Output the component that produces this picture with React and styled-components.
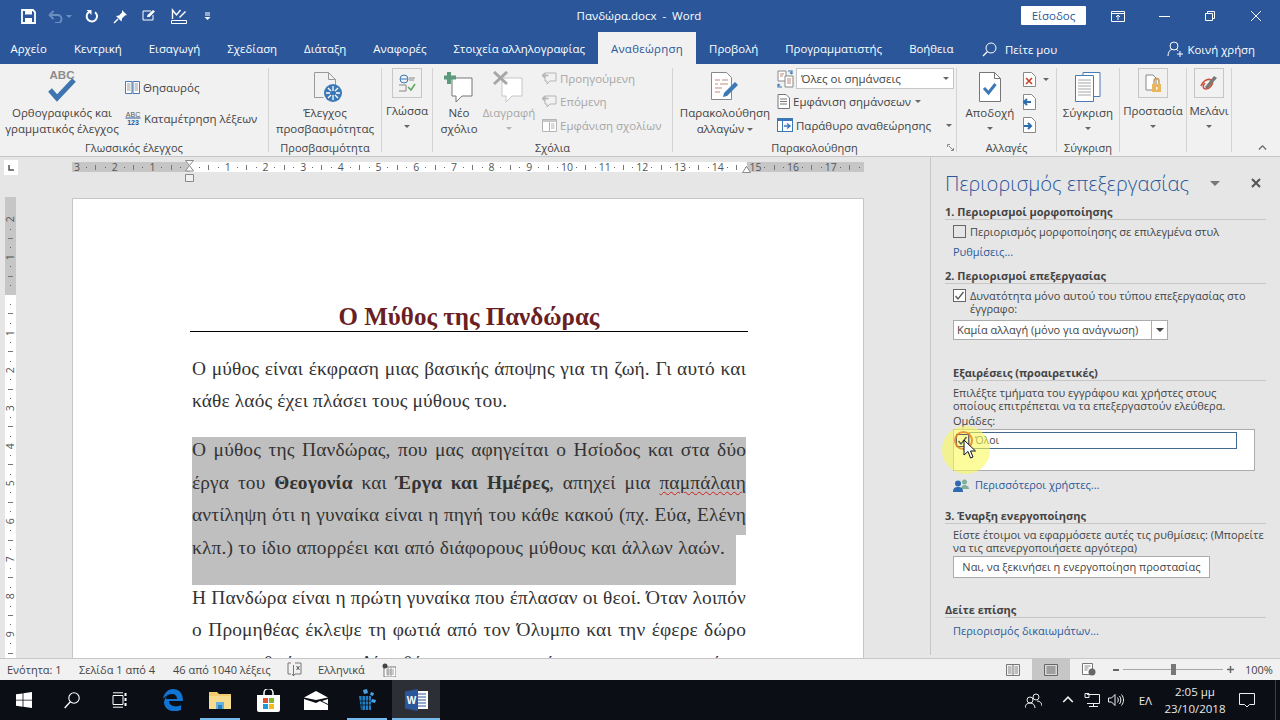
import React from 'react';
import styled, { createGlobalStyle } from 'styled-components';

const UI = '"Open Sans", "Noto Sans", sans-serif';
const BLUE = '#2b579a';

const Global = createGlobalStyle`
  html, body { margin: 0; padding: 0; background: #e6e6e6; }
  * { box-sizing: border-box; }
`;

const Frame = styled.div`
  width: 1280px;
  height: 720px;
  overflow: hidden;
  display: flex;
  flex-direction: column;
  font-family: ${UI};
  font-size: 11.5px;
  color: #444;
`;

const Svg = styled.svg`
  display: block;
  flex: none;
`;

/* ---------- title bar ---------- */
const TitleBar = styled.div`
  height: 32px;
  flex: none;
  display: flex;
  align-items: center;
  background: ${BLUE};
  color: #fff;
`;
const QuickAccess = styled.div`
  width: 559px;
  display: flex;
  align-items: center;
  padding-left: 14px;
`;
const QuickBtn = styled.div`
  width: ${(p) => p.$w || 29}px;
  height: 22px;
  display: flex;
  align-items: center;
  justify-content: center;
  gap: 3px;
`;
const DocTitle = styled.div`
  width: 160px;
  text-align: center;
  font-size: 11.5px;
  white-space: pre;
  margin-top: -1px;
`;
const WindowArea = styled.div`
  flex: 1;
  display: flex;
  align-items: center;
  justify-content: flex-end;
  padding-right: 1px;
`;
const SignIn = styled.div`
  width: 65px;
  height: 19px;
  margin: -1px 9px 0 0;
  background: #fff;
  color: ${BLUE};
  border-radius: 1px;
  font-size: 11.5px;
  line-height: 19px;
  text-align: center;
`;
const WinBtn = styled.div`
  width: 46px;
  height: 32px;
  display: flex;
  align-items: center;
  justify-content: center;
`;

/* ---------- tabs ---------- */
const TabBar = styled.div`
  height: 32px;
  flex: none;
  display: flex;
  align-items: stretch;
  background: ${BLUE};
`;
const Tab = styled.div`
  padding: 0 ${(p) => (p.$active ? 12.5 : 13.5)}px;
  height: 32px;
  line-height: 34px;
  font-size: 11.42px;
  letter-spacing: ${(p) => (p.$active ? 0.3 : 0)}px;
  white-space: nowrap;
  color: ${(p) => (p.$active ? BLUE : '#fff')};
  background: ${(p) => (p.$active ? '#f1f1f1' : 'transparent')};
  &:first-child { margin-left: -3px; }
`;
const TellMe = styled.div`
  display: flex;
  align-items: center;
  gap: 8px;
  margin-left: 15px;
  color: #fff;
  font-size: 11.42px;
  padding-top: 2px;
`;
const Share = styled.div`
  margin-left: auto;
  margin-right: 25px;
  display: flex;
  align-items: center;
  gap: 4px;
  color: #fff;
  font-size: 11.35px;
  padding-top: 2px;
`;

/* ---------- ribbon ---------- */
const Ribbon = styled.div`
  height: 93px;
  flex: none;
  display: flex;
  background: #f1f1f1;
  border-bottom: 1px solid #c6c6c6;
  padding-top: 4px;
`;
const Group = styled.div`
  position: relative;
  width: ${(p) => p.$w}px;
  height: 84px;
  flex: none;
  display: flex;
  flex-direction: column;
  border-right: 1px solid #d4d4d4;
`;
const GroupBody = styled.div`
  height: 73px;
  flex: none;
  display: flex;
  justify-content: ${(p) => (p.$center ? 'center' : 'flex-start')};
  padding-left: ${(p) => p.$pad || 0}px;
`;
const GroupLabel = styled.div`
  height: 11px;
  line-height: 14px;
  text-align: center;
  font-size: 11px;
  white-space: nowrap;
`;
const BigBtn = styled.div`
  width: ${(p) => p.$w}px;
  flex: none;
  display: flex;
  flex-direction: column;
  align-items: center;
  margin-left: ${(p) => p.$ml || 0}px;
  color: ${(p) => (p.$off ? '#a6a6a6' : '#444')};
`;
const IconSlot = styled.div`
  height: 37px;
  flex: none;
  display: flex;
  align-items: center;
  justify-content: center;
  padding-left: ${(p) => p.$pl || 0}px;
`;
const BoxSlot = styled.div`
  width: 30px;
  height: 30px;
  flex: none;
  display: flex;
  align-items: center;
  justify-content: center;
  border: 1px solid #c6c6c6;
  margin-bottom: 5px;
`;
const BtnText = styled.div`
  line-height: 16px;
  text-align: center;
  white-space: nowrap;
  font-size: 11.5px;
`;
const Caret = styled.span`
  display: inline-block;
  flex: none;
  width: 0;
  height: 0;
  border-left: ${(p) => p.$s || 3}px solid transparent;
  border-right: ${(p) => p.$s || 3}px solid transparent;
  border-top: ${(p) => p.$s || 3}px solid ${(p) => p.$c || '#666'};
  margin: ${(p) => p.$m || '0'};
  vertical-align: middle;
`;
const CaretRow = styled.div`
  height: 14px;
  display: flex;
  align-items: center;
  justify-content: center;
`;
const SmallCol = styled.div`
  display: flex;
  flex-direction: column;
  flex: none;
  gap: ${(p) => p.$gap}px;
  padding-top: ${(p) => p.$top || 0}px;
  margin-left: ${(p) => p.$ml || 0}px;
`;
const SmallRow = styled.div`
  height: ${(p) => p.$h || 16}px;
  margin-top: ${(p) => p.$mt || 0}px;
  display: flex;
  align-items: center;
  gap: ${(p) => (p.$gap === undefined ? 3 : p.$gap)}px;
  white-space: nowrap;
  color: ${(p) => (p.$off ? '#a6a6a6' : '#444')};
  font-size: 11.5px;
`;
const MarkupSelect = styled.div`
  width: 158px;
  height: 21px;
  display: flex;
  align-items: center;
  justify-content: space-between;
  padding: 0 4px;
  background: #fff;
  border: 1px solid #c6c6c6;
  font-size: 11.5px;
`;
const Launcher = styled.div`
  position: absolute;
  right: 2px;
  bottom: 1px;
`;
const Collapse = styled.div`
  margin-left: 26px;
  align-self: flex-start;
  margin-top: 77px;
`;

/* ---------- work area ---------- */
const Workspace = styled.div`
  flex: 1;
  min-height: 0;
  display: flex;
  background: #e6e6e6;
`;
const DocArea = styled.div`
  position: relative;
  width: 930px;
  flex: none;
  overflow: hidden;
`;
const CornerTab = styled.div`
  position: absolute;
  left: 4px;
  top: 3px;
  width: 14px;
  height: 15px;
  background: #fff;
  display: flex;
  align-items: center;
  justify-content: center;
`;
const HRuler = styled.div`
  position: relative;
  width: 792px;
  height: 10px;
  margin: 5px 0 0 72px;
  display: flex;
  padding-left: 0.3px;
  background: linear-gradient(to right, #c6c6c6 118px, #fff 118px, #fff 675px, #c6c6c6 675px);
`;
const Marker = styled.div`
  position: absolute;
  left: ${(p) => p.$x}px;
  top: ${(p) => p.$y}px;
`;
const RulerCell = styled.div`
  width: 9.425px;
  flex: none;
  display: flex;
  align-items: center;
  justify-content: center;
  font-size: 10.5px;
  line-height: 1;
  color: #555;
`;
const Dot = styled.span`
  width: 1px;
  height: 1px;
  background: #666;
`;
const Tick = styled.span`
  width: 1px;
  height: 5px;
  background: #777;
`;
const VRuler = styled.div`
  position: absolute;
  left: 5px;
  top: 40px;
  width: 11px;
  height: 461px;
  padding-top: 18px;
  display: flex;
  flex-direction: column;
  background: linear-gradient(to bottom, #c6c6c6 98px, #fff 98px);
`;
const VCell = styled.div`
  height: 9.425px;
  flex: none;
  display: flex;
  align-items: center;
  justify-content: center;
  font-size: 10.5px;
  line-height: 1;
  color: #555;
`;
const VNum = styled.span`
  transform: rotate(-90deg);
`;
const VTick = styled.span`
  width: 5px;
  height: 1px;
  background: #777;
`;
const Page = styled.div`
  width: 792px;
  margin: 26px 0 0 72px;
  height: 460px;
  overflow: hidden;
  background: #fff;
  border: 1px solid #c6c6c6;
  border-bottom: 0;
  padding: 103px 0 0 117px;
  font-family: "Liberation Serif", serif;
  color: #333;
`;
const DocHeading = styled.div`
  width: 558px;
  height: 30px;
  border-bottom: 1px solid #000;
  text-align: center;
  font-weight: 700;
  font-size: 25px;
  line-height: 30px;
  color: #6a1f24;
  margin-bottom: 23.5px;
`;
const Para = styled.div`
  width: 556px;
  padding-left: 2px;
  margin-bottom: ${(p) => p.$mb || 0}px;
`;
const Line = styled.div`
  height: ${(p) => 32.7 + (p.$extra || 0)}px;
  line-height: 25px;
  font-size: 19.4px;
  text-align: ${(p) => (p.$left ? 'left' : 'justify')};
  text-align-last: ${(p) => (p.$left ? 'left' : 'justify')};
  letter-spacing: 0.15px;
  margin-right: ${(p) => p.$mr || 0}px;
  padding-right: ${(p) => p.$pr || 0}px;
  background: ${(p) => (p.$sel ? '#bfbfbf' : 'transparent')};
`;
const Misspelled = styled.span`
  text-decoration: underline wavy #d02020 1px;
  text-underline-offset: 2px;
`;

/* ---------- restrict editing pane ---------- */
const Pane = styled.div`
  flex: 1;
  min-width: 0;
  margin-bottom: 3px;
  padding: 12px 14px 0 14px;
  border-left: 1px solid #c6c6c6;
`;
const PaneHead = styled.div`
  height: 28px;
  display: flex;
  align-items: center;
`;
const PaneTitle = styled.div`
  font-size: 20.2px;
  font-weight: 300;
  color: ${BLUE};
  width: 265px;
  white-space: nowrap;
`;
const PaneClose = styled.div`
  margin-left: 31px;
`;
const Heading = styled.div`
  height: 15px;
  line-height: 13px;
  margin-top: ${(p) => p.$mt}px;
  margin-left: ${(p) => p.$ml || 0}px;
  border-bottom: 1px solid #c6c6c6;
  font-weight: 700;
  font-size: 11px;
  color: #444;
  white-space: nowrap;
`;
const Indent = styled.div`
  margin-left: 8px;
  margin-top: ${(p) => p.$mt || 0}px;
`;
const CheckRow = styled.div`
  display: flex;
  align-items: flex-start;
  gap: 4px;
  line-height: 13px;
  font-size: 11px;
`;
const CheckBox = styled.div`
  width: 13px;
  height: 13px;
  flex: none;
  background: ${(p) => (p.$plain ? 'transparent' : '#fff')};
  border: 1px solid #666;
  display: flex;
  align-items: center;
  justify-content: center;
`;
const PaneLink = styled.div`
  line-height: 14px;
  font-size: 11px;
  color: #2b5a9a;
  white-space: nowrap;
`;
const PaneText = styled.div`
  line-height: 13px;
  font-size: 11px;
  white-space: nowrap;
`;
const SplitSelect = styled.div`
  width: 215px;
  height: 20px;
  display: flex;
  background: #fff;
  border: 1px solid #ababab;
  font-size: 11px;
  line-height: 18px;
  padding-left: 3px;
`;
const SplitArrow = styled.div`
  margin-left: auto;
  width: 16px;
  border-left: 1px solid #ababab;
  display: flex;
  align-items: center;
  justify-content: center;
`;
const GroupList = styled.div`
  position: relative;
  width: 302px;
  height: 42px;
  background: #fff;
  border: 1px solid #ababab;
`;
const GroupRow = styled.div`
  position: absolute;
  left: 15px;
  top: 2px;
  width: 268px;
  height: 17px;
  border: 1px solid #41688d;
  padding-left: 5px;
  line-height: 14px;
  font-size: 10.5px;
`;
const Spotlight = styled.div`
  position: absolute;
  left: -12px;
  top: -4px;
  width: 48px;
  height: 48px;
  border-radius: 50%;
  background: rgba(250, 250, 90, 0.6);
`;
const ListCheck = styled(CheckBox)`
  position: absolute;
  left: 2px;
  top: 4px;
  background: transparent;
`;
const ClickRing = styled.div`
  position: absolute;
  left: 0;
  top: 1px;
  width: 19px;
  height: 19px;
  border-radius: 50%;
  border: 2px solid rgba(232, 130, 40, 0.85);
`;
const Pointer = styled.div`
  position: absolute;
  left: 9px;
  top: 9px;
`;
const MoreUsers = styled.div`
  display: flex;
  align-items: center;
  gap: 6px;
`;
const PaneButton = styled.div`
  width: 257px;
  height: 22px;
  background: #fff;
  border: 1px solid #ababab;
  line-height: 20px;
  text-align: center;
  font-size: 11px;
  white-space: nowrap;
`;

/* ---------- status bar ---------- */
const StatusBar = styled.div`
  height: 22px;
  flex: none;
  display: flex;
  align-items: stretch;
  background: #f1f1f1;
  border-top: 1px solid #c6c6c6;
  font-size: 11px;
  color: #444;
  padding-left: 7px;
`;
const StatusItem = styled.div`
  display: flex;
  align-items: center;
  width: ${(p) => p.$w}px;
  flex: none;
  white-space: nowrap;
`;
const ViewBtn = styled.div`
  width: ${(p) => p.$w || 38}px;
  display: flex;
  align-items: center;
  justify-content: center;
  background: ${(p) => (p.$on ? '#c6c6c6' : 'transparent')};
`;
const Zoom = styled.div`
  display: flex;
  align-items: center;
  margin-left: 17px;
  gap: 4px;
`;
const ZoomTrack = styled.div`
  position: relative;
  width: 100px;
  height: 1px;
  background: #a6a6a6;
`;
const ZoomThumb = styled.div`
  position: absolute;
  left: 48px;
  top: -5px;
  width: 5px;
  height: 11px;
  background: #777;
`;
const ZoomText = styled.div`
  margin-left: 7px;
`;

/* ---------- task bar ---------- */
const TaskBar = styled.div`
  height: 40px;
  flex: none;
  display: flex;
  align-items: stretch;
  background: #0b0e15;
  color: #e8e8e8;
`;
const TaskBtn = styled.div`
  position: relative;
  width: 48px;
  flex: none;
  margin-left: ${(p) => p.$ml || 0}px;
  display: flex;
  align-items: center;
  justify-content: center;
  background: ${(p) => (p.$on ? '#2c2f36' : 'transparent')};
  &::after {
    content: '';
    position: absolute;
    left: ${(p) => (p.$on ? 0 : 4)}px;
    right: ${(p) => (p.$on ? 0 : 4)}px;
    bottom: 0;
    height: 2px;
    background: ${(p) => (p.$run ? '#76b9ed' : 'transparent')};
  }
`;
const Tray = styled.div`
  margin-left: auto;
  display: flex;
  align-items: center;
  padding-right: 20px;
`;
const TrayItem = styled.div`
  display: flex;
  align-items: center;
  justify-content: center;
  flex: none;
  margin-left: ${(p) => p.$ml || 0}px;
`;
const Lang = styled.div`
  font-size: 11.5px;
  margin-left: 15px;
`;
const Clock = styled.div`
  width: 70px;
  margin-left: 8px;
  font-size: 11.5px;
  line-height: 17px;
  text-align: center;
`;
const ShowDesktop = styled.div`
  width: 5px;
  flex: none;
  border-left: 1px solid #3c3f46;
`;

/* ---------- icons ---------- */
const SaveIcon = () => (
  <Svg width="15" height="15" viewBox="0 0 15 15">
    <path d="M1 1h11l2 2v11H1z" fill="none" stroke="#fff" strokeWidth="1.8" />
    <path d="M4 1.5h7v4H4z" fill="#fff" />
    <path d="M4 9h7v5H4z" fill="#fff" />
  </Svg>
);
const UndoIcon = () => (
  <Svg width="15" height="13" viewBox="0 0 15 13">
    <path d="M1.5 5h8a4 4 0 0 1 0 8H7" fill="none" stroke="#6d8fc0" strokeWidth="1.8" />
    <path d="M5.5 1L1.5 5l4 4" fill="none" stroke="#6d8fc0" strokeWidth="1.8" />
  </Svg>
);
const RepeatIcon = () => (
  <Svg width="14" height="14" viewBox="0 0 14 14">
    <path d="M4 3a5.2 5.2 0 1 0 6 .2" fill="none" stroke="#fff" strokeWidth="2" />
    <path d="M1.5 1h5v5z" fill="#fff" />
  </Svg>
);
const PinIcon = () => (
  <Svg width="15" height="15" viewBox="0 0 15 15">
    <path d="M9 1l5 5-2 .5-3 3-.5 3L3 7l3-.5 3-3z" fill="#fff" />
    <path d="M5 10l-4 4" stroke="#fff" strokeWidth="1.4" />
  </Svg>
);
const NoteIcon = () => (
  <Svg width="15" height="14" viewBox="0 0 15 14">
    <path d="M9 2H1v9h10V6" fill="none" stroke="#fff" />
    <path d="M5 8l.5-2L11 1l2 1.5L7.500 8z" fill="#fff" />
  </Svg>
);
const MarkRulerIcon = () => (
  <Svg width="16" height="16" viewBox="0 0 16 16">
    <path d="M1.500 11V2l4 5 4-5" fill="none" stroke="#fff" strokeWidth="1.4" />
    <path d="M8 9l6-6 1 1-6 6z" fill="#fff" />
    <path d="M.5 12.500h15v3H.5z" fill="none" stroke="#fff" />
  </Svg>
);
const MoreIcon = () => (
  <Svg width="7" height="8" viewBox="0 0 7 8">
    <path d="M1 1h5M1 3h5" stroke="#fff" />
    <path d="M.5 5h6L3.500 8z" fill="#fff" />
  </Svg>
);
const SpellIcon = () => (
  <Svg width="34" height="36" viewBox="0 0 34 36">
    <text x="17" y="10" textAnchor="middle" fontSize="11.500" fontWeight="700" fill="#8c8c8c" fontFamily="Liberation Sans">ABC</text>
    <path d="M5 21l7 8L29 11" fill="none" stroke="#3e75b0" strokeWidth="5" />
  </Svg>
);
const BookIcon = () => (
  <Svg width="15" height="13" viewBox="0 0 15 13">
    <path d="M.5.500h6.500v12H.5zM8 .5h6.500v12H8z" fill="#fff" stroke="#4a7bb5" />
    <path d="M2 3h3.500M2 5h3.500M2 7h3.500M2 9h3.500M9.500 3H13M9.500 5H13M9.500 7H13M9.500 9H13" stroke="#999" />
  </Svg>
);
const CountIcon = () => (
  <Svg width="16" height="16" viewBox="0 0 16 16">
    <text x="8" y="6.500" textAnchor="middle" fontSize="7" fill="#555" fontFamily="Liberation Sans">ABC</text>
    <path d="M.5 8h15" stroke="#2b579a" />
    <text x="8" y="14.500" textAnchor="middle" fontSize="7" fontWeight="700" fill="#2b579a" fontFamily="Liberation Sans">123</text>
  </Svg>
);
const AccessIcon = () => (
  <Svg width="30" height="32" viewBox="0 0 30 32">
    <path d="M1.500 1.500h14l7 7v9M1.500 1.500v25h9" fill="none" stroke="#999" />
    <path d="M15.500 1.500v7h7" fill="none" stroke="#999" />
    <circle cx="20" cy="22" r="9" fill="#3b78b5" />
    <path d="M20 15v5M20 24v5M13 22h4M23 22h4M15 17l3 3M25 17l-3 3M15 27l3-3M25 27l-3-3" stroke="#fff" strokeWidth="1.300" />
  </Svg>
);
const LanguageIcon = () => (
  <Svg width="18" height="18" viewBox="0 0 18 18">
    <circle cx="6" cy="5" r="4" fill="none" stroke="#3b78b5" />
    <path d="M2 5h8" stroke="#3b78b5" />
    <path d="M11 4h6M11 6h5M1 11h7v6H1" fill="none" stroke="#888" />
    <path d="M10 13l3 3 4-6" fill="none" stroke="#5da55d" strokeWidth="1.500" />
  </Svg>
);
const CommentShape = ({ stroke = '#777' }) => (
  <path d="M8 8h20v18H18l-6 6v-6H8z" fill="#fff" stroke={stroke} transform="translate(1 -1)" />
);
const NewCommentIcon = () => (
  <Svg width="32" height="32" viewBox="0 0 32 32">
    <CommentShape />
    <path d="M5 1v12M0 6.500h12" stroke="#5b9a7c" strokeWidth="4" transform="translate(1 0)" />
  </Svg>
);
const DelCommentIcon = () => (
  <Svg width="32" height="32" viewBox="0 0 32 32">
    <CommentShape stroke="#c6c6c6" />
    <path d="M1 1l13 12M14 1L1 13" stroke="#a6a6a6" strokeWidth="3" />
  </Svg>
);
const PrevIcon = () => (
  <Svg width="15" height="15" viewBox="0 0 15 15">
    <path d="M3 2h11v8H8l-3 3v-3H3z" fill="none" stroke="#b5b5b5" />
    <path d="M.5 4.500h6M3 2L.5 4.500 3 7" fill="none" stroke="#b5b5b5" strokeWidth="1.300" />
  </Svg>
);
const ShowCommentsIcon = () => (
  <Svg width="15" height="13" viewBox="0 0 15 13">
    <path d="M.5.500h14v12H.5z" fill="#fff" stroke="#b5b5b5" />
    <path d="M1 1h13v2H1z" fill="#c9c9c9" />
    <path d="M9 5h3.500M9 7h3.500M9 9h3.500" stroke="#b5b5b5" />
    <path d="M7.500 3v9" stroke="#b5b5b5" />
  </Svg>
);
const TrackIcon = () => (
  <Svg width="30" height="30" viewBox="0 0 30 30">
    <path d="M1.500.5h15l5 5v22h-20z" fill="#fff" stroke="#888" />
    <path d="M5 8h5M12 8h6M5 12h3M10 12h8M5 16h7M5 20h5" stroke="#c08a78" />
    <path d="M13 25l1-4L25 10l3 3-11 11z" fill="#3b78b5" />
  </Svg>
);
const DisplayIcon = () => (
  <Svg width="17" height="18" viewBox="0 0 17 18">
    <path d="M1 1h8v10H1z" fill="#fff" stroke="#888" />
    <path d="M8 6h8v11H8z" fill="#fff" stroke="#888" />
    <path d="M10 9h4M10 11h4M10 13h4M3 4h4M3 6h3" stroke="#c08a78" />
    <path d="M11 1h4v3M15 4l-2-1.500M1 14v3h4M1 14l2 1.500" fill="none" stroke="#3b78b5" strokeWidth="1.200" />
  </Svg>
);
const ShowMarkupIcon = () => (
  <Svg width="13" height="15" viewBox="0 0 13 15">
    <path d="M1 .5h8l3.500 3.500v10.500H1z" fill="#fff" stroke="#777" />
    <path d="M3 5h7M3 7.500h7M3 10h7" stroke="#777" />
  </Svg>
);
const ReviewPaneIcon = () => (
  <Svg width="16" height="14" viewBox="0 0 16 14">
    <path d="M0 0h16v14H0z" fill="#3b78b5" />
    <path d="M1 3h4v10H1zM6 3h9v10H6z" fill="#fff" />
    <path d="M7 8h5M10 5.500L13 8l-3 2.500" fill="none" stroke="#3b78b5" strokeWidth="1.400" />
  </Svg>
);
const AcceptIcon = () => (
  <Svg width="22" height="30" viewBox="0 0 22 30">
    <path d="M.5.500h15l6 6v23H.5z" fill="#fff" stroke="#777" />
    <path d="M15.500.5v6h6" fill="none" stroke="#777" />
    <path d="M5 16l4.500 5 7-9" fill="none" stroke="#3b78b5" strokeWidth="3" />
  </Svg>
);
const RejectIcon = () => (
  <Svg width="13" height="15" viewBox="0 0 13 15">
    <path d="M.5.500h8l4 4v10H.5z" fill="#fff" stroke="#888" />
    <path d="M3 6l6 6M9 6l-6 6" stroke="#c8402a" strokeWidth="1.600" />
  </Svg>
);
const SmallDocArrow = ({ flip }) => (
  <Svg width="13" height="16" viewBox="0 0 13 16">
    <path d="M.5.500h8l4 4v11H.5z" fill="#fff" stroke="#888" />
    <path d={flip ? 'M1 8h7M4 5L1 8l3 3' : 'M1 9h7M5 6l3 3-3 3'} fill="none" stroke="#2b6cab" strokeWidth="2" />
  </Svg>
);
const CompareIcon = () => (
  <Svg width="26" height="30" viewBox="0 0 26 30">
    <path d="M8 .5h17v24H8z" fill="#fff" stroke="#4a7bb5" />
    <path d="M.5 3.500h18v26H.5z" fill="#fff" stroke="#4a7bb5" />
    <path d="M3 8h13M3 11h13M3 14h13M3 17h13M3 20h13M3 23h13" stroke="#a6a6a6" />
  </Svg>
);
const ProtectIcon = () => (
  <Svg width="20" height="20" viewBox="0 0 20 20">
    <path d="M3 2h7l3 3v12H3z" fill="#fff" stroke="#888" />
    <path d="M9 11h9v8H9z" fill="#e9b65d" />
    <path d="M11 11V8a2.500 2.500 0 0 1 5 0v3" fill="none" stroke="#c29a55" strokeWidth="1.400" />
    <path d="M13 14h1.500v2.500H13z" fill="#fff" />
  </Svg>
);
const InkIcon = () => (
  <Svg width="20" height="20" viewBox="0 0 20 20">
    <path d="M2 13c3-7 9-8 11-5s-3 8-6 8-4-3-1-6" fill="none" stroke="#c8503a" strokeWidth="1.600" />
    <path d="M6 14L15 3l3 2-10 11z" fill="#777" />
  </Svg>
);
const LauncherIcon = () => (
  <Svg width="7" height="7" viewBox="0 0 7 7">
    <path d="M.5 3V.5H3M6.500 4v2.500H4" fill="none" stroke="#888" />
    <path d="M2 2l4 4" stroke="#888" />
  </Svg>
);
const ChevronUp = ({ c = '#666', s = 9 }) => (
  <Svg width={s} height={s * 0.6} viewBox="0 0 10 6">
    <path d="M1 5l4-4 4 4" fill="none" stroke={c} strokeWidth="1.400" />
  </Svg>
);
const CheckMark = () => (
  <Svg width="11" height="10" viewBox="0 0 11 10">
    <path d="M1.500 5l2.500 3 5.500-7" fill="none" stroke="#555" strokeWidth="1.300" />
  </Svg>
);
const CursorArrow = () => (
  <Svg width="14" height="21" viewBox="0 0 14 21">
    <path d="M1 1v15l4-3.500 2.500 6.500 2.500-1-2.500-6h5z" fill="#fff" stroke="#111" strokeWidth="1" />
  </Svg>
);
const UsersIcon = () => (
  <Svg width="16" height="13" viewBox="0 0 16 13">
    <circle cx="11.500" cy="3" r="2.500" fill="#7fae9a" />
    <path d="M8 10c0-3 2-4 3.500-4S16 7 16 10z" fill="#7fae9a" />
    <circle cx="5" cy="4.500" r="3" fill="#2f6bb0" />
    <path d="M0 13c0-4 2-5 5-5s5 1 5 5z" fill="#2f6bb0" />
  </Svg>
);
const BookXIcon = () => (
  <Svg width="15" height="15" viewBox="0 0 15 15">
    <path d="M4 1H1v11h3M8 1h6v11H8M6.500 3v11M5 12l1.500 2L8 12" fill="none" stroke="#777" />
    <path d="M9.500 4l3 4M12.500 4l-3 4" stroke="#555" />
  </Svg>
);
const MacroIcon = () => (
  <Svg width="14" height="14" viewBox="0 0 14 14">
    <path d="M2 4h12v10H2z" fill="#fff" stroke="#777" />
    <path d="M4 7h8M4 9h8M4 11h8M6 5v8M9 5v8" stroke="#999" />
    <circle cx="3" cy="3" r="2.500" fill="#444" />
  </Svg>
);
const ReadViewIcon = () => (
  <Svg width="14" height="12" viewBox="0 0 14 12">
    <path d="M.5.500h13v11H.5zM7 .5v11" fill="none" stroke="#777" />
    <path d="M2 3h3.500M2 5h3.500M2 7h3.500M2 9h3.500M8.500 3H12M8.500 5H12M8.500 7H12M8.500 9H12" stroke="#888" />
  </Svg>
);
const PrintViewIcon = () => (
  <Svg width="14" height="12" viewBox="0 0 14 12">
    <path d="M.5.500h13v11H.5z" fill="#d8d8d8" stroke="#666" />
    <path d="M2.500 3h9M2.500 5h9M2.500 7h9M2.500 9h9" stroke="#666" />
  </Svg>
);
const WebViewIcon = () => (
  <Svg width="14" height="13" viewBox="0 0 14 13">
    <path d="M.5.500h10v11H.5z" fill="#fff" stroke="#777" />
    <path d="M2.500 3h6M2.500 5h4M2.500 7h3" stroke="#888" />
    <circle cx="10" cy="9" r="3.500" fill="#666" />
  </Svg>
);
const WinLogo = () => (
  <Svg width="16" height="16" viewBox="0 0 16 16">
    <path d="M0 2.300l6.600-.9v6.300H0zM7.400 1.300L16 0v7.700H7.400zM0 8.400h6.600v6.300L0 13.800zM7.400 8.400H16V16l-8.600-1.200z" fill="#fff" />
  </Svg>
);
const TaskSearch = () => (
  <Svg width="16" height="17" viewBox="0 0 16 17">
    <circle cx="10" cy="6" r="5.200" fill="none" stroke="#fff" strokeWidth="1.100" />
    <path d="M6.300 9.800L.7 16" stroke="#fff" strokeWidth="1.300" />
  </Svg>
);
const TaskView = () => (
  <Svg width="16" height="16" viewBox="0 0 16 16">
    <path d="M1 3.500h10v9H1zM1 .8h10M1 15.200h10" fill="none" stroke="#fff" />
    <path d="M13.500 1v3M13.500 6v3M13.500 11v3" stroke="#fff" strokeWidth="2" />
  </Svg>
);
const EdgeLogo = () => (
  <Svg width="21" height="22" viewBox="0 0 21 22">
    <path d="M1 10C2 3 7 0 11 0c6 0 10 4 10 12H7c0 5 7 7 12 4v5c-7 3-16 1-17-7 0-3 1-5 3-7-1 2-1 3-1 3h11c0-3-2-5-5-5S3 7 1 10z" fill="#1173d4" />
  </Svg>
);
const FolderLogo = () => (
  <Svg width="22" height="18" viewBox="0 0 22 18">
    <path d="M0 1h8l2 2h12v15H0z" fill="#f2cc6e" />
    <path d="M0 5h22v13H0z" fill="#f7dc8e" />
    <path d="M7 11h8v7H7z" fill="#63b1de" />
    <path d="M9 14h4v4H9z" fill="#2d7fb6" />
  </Svg>
);
const StoreLogo = () => (
  <Svg width="23" height="23" viewBox="0 0 23 23">
    <path d="M7 6V4a4.500 4.500 0 0 1 9 0v2" fill="none" stroke="#fff" strokeWidth="1.500" />
    <path d="M0 6h23v15a2 2 0 0 1-2 2H2a2 2 0 0 1-2-2z" fill="#fff" />
    <path d="M6 9h5v5H6z" fill="#e2502d" />
    <path d="M12 9h5v5h-5z" fill="#7fb62f" />
    <path d="M6 15h5v5H6z" fill="#1e9be0" />
    <path d="M12 15h5v5h-5z" fill="#f5bb1b" />
  </Svg>
);
const MailLogo = () => (
  <Svg width="24" height="19" viewBox="0 0 24 19">
    <path d="M12 0l12 6.500L12 9 0 6.500z" fill="#fff" />
    <path d="M0 8l12 4 4-2 8 4v5H0z" fill="#fff" />
    <path d="M24 8v5l-6-3z" fill="#fff" />
  </Svg>
);
const StackLogo = () => (
  <Svg width="20" height="22" viewBox="0 0 20 22">
    <path d="M2 7h12v14H4z" fill="#1f7fc4" />
    <path d="M5 7v14M8.500 7v14M11.500 7v14M2 12h12M3 16h11" stroke="#0b0e15" strokeWidth="0.800" />
    <path d="M6 1l4-1 1 4-4 1zM14 3l3 1-1 3-3-1zM15 10l4 1-1 3-4-1z" fill="#4aa3df" />
  </Svg>
);
const WordLogo = () => (
  <Svg width="23" height="22" viewBox="0 0 23 22">
    <path d="M10 2h13v18H10z" fill="#fff" />
    <path d="M12 5h9M12 8h9M12 11h9M12 14h9M12 17h9" stroke="#2b579a" />
    <path d="M0 2.500L13 0v22L0 19.500z" fill="#2b579a" />
    <text x="6.500" y="15" textAnchor="middle" fontSize="10" fontWeight="700" fill="#fff" fontFamily="Liberation Sans">W</text>
  </Svg>
);

const hNumbers = [3, 2, 1, '', 1, 2, 3, 4, 5, 6, 7, 8, 9, 10, 11, 12, 13, 14, 15, 16, 17];
const vNumbers = [2, 1, '', 1, 2, 3, 4, 5, 6, 7, 8, 9];

const App = () => {
  return (
    <Frame>
      <Global />
      <TitleBar>
        <QuickAccess>
          <QuickBtn><SaveIcon /></QuickBtn>
          <QuickBtn $w={34}><UndoIcon /><Caret $c="#6d8fc0" /></QuickBtn>
          <QuickBtn><RepeatIcon /></QuickBtn>
          <QuickBtn><PinIcon /></QuickBtn>
          <QuickBtn><NoteIcon /></QuickBtn>
          <QuickBtn><MarkRulerIcon /></QuickBtn>
          <QuickBtn><MoreIcon /></QuickBtn>
        </QuickAccess>
        <DocTitle>Πανδώρα.docx  -  Word</DocTitle>
        <WindowArea>
          <SignIn>Είσοδος</SignIn>
          <WinBtn>
            <Svg width="14" height="11" viewBox="0 0 14 11">
              <path d="M.5.500h13v10H.5zM.5 2.500h13M7 9V4M5 6l2-2 2 2" fill="none" stroke="#fff" />
            </Svg>
          </WinBtn>
          <WinBtn>
            <Svg width="11" height="1" viewBox="0 0 11 1"><path d="M0 .5h11" stroke="#fff" /></Svg>
          </WinBtn>
          <WinBtn>
            <Svg width="10" height="10" viewBox="0 0 10 10">
              <path d="M.5 2.500h7v7h-7zM2.500 2.500v-2h7v7h-2" fill="none" stroke="#fff" />
            </Svg>
          </WinBtn>
          <WinBtn>
            <Svg width="10" height="10" viewBox="0 0 10 10"><path d="M0 0l10 10M10 0L0 10" stroke="#fff" /></Svg>
          </WinBtn>
        </WindowArea>
      </TitleBar>

      <TabBar>
        <Tab>Αρχείο</Tab>
        <Tab>Κεντρική</Tab>
        <Tab>Εισαγωγή</Tab>
        <Tab>Σχεδίαση</Tab>
        <Tab>Διάταξη</Tab>
        <Tab>Αναφορές</Tab>
        <Tab>Στοιχεία αλληλογραφίας</Tab>
        <Tab $active>Αναθεώρηση</Tab>
        <Tab>Προβολή</Tab>
        <Tab>Προγραμματιστής</Tab>
        <Tab>Βοήθεια</Tab>
        <TellMe>
          <Svg width="15" height="15" viewBox="0 0 15 15">
            <circle cx="9" cy="6" r="5" fill="none" stroke="#fff" />
            <path d="M5.500 9.500L1 14" stroke="#fff" strokeWidth="1.200" />
          </Svg>
          Πείτε μου
        </TellMe>
        <Share>
          <Svg width="16" height="16" viewBox="0 0 16 16">
            <circle cx="7" cy="5" r="4" fill="none" stroke="#fff" />
            <path d="M1 15c0-4 2-6 4-7M9 8c1 .4 1.500 1 2 2M10 13h6M13 10v6" fill="none" stroke="#fff" />
          </Svg>
          Κοινή χρήση
        </Share>
      </TabBar>

      <Ribbon>
        <Group $w={269}>
          <GroupBody $pad={4}>
            <BigBtn $w={116}>
              <IconSlot><SpellIcon /></IconSlot>
              <BtnText>Ορθογραφικός και</BtnText>
              <BtnText>γραμματικός έλεγχος</BtnText>
            </BigBtn>
            <SmallCol $ml={5} $top={11} $gap={15}>
              <SmallRow><BookIcon />Θησαυρός</SmallRow>
              <SmallRow><CountIcon />Καταμέτρηση λέξεων</SmallRow>
            </SmallCol>
          </GroupBody>
          <GroupLabel>Γλωσσικός έλεγχος</GroupLabel>
        </Group>

        <Group $w={113}>
          <GroupBody $center>
            <BigBtn $w={112}>
              <IconSlot $pl={5}><AccessIcon /></IconSlot>
              <BtnText>Έλεγχος</BtnText>
              <BtnText>προσβασιμότητας</BtnText>
            </BigBtn>
          </GroupBody>
          <GroupLabel>Προσβασιμότητα</GroupLabel>
        </Group>

        <Group $w={51}>
          <GroupBody $center>
            <BigBtn $w={50}>
              <BoxSlot><LanguageIcon /></BoxSlot>
              <BtnText>Γλώσσα</BtnText>
              <CaretRow><Caret /></CaretRow>
            </BigBtn>
          </GroupBody>
        </Group>

        <Group $w={240}>
          <GroupBody>
            <BigBtn $w={50} $ml={1}>
              <IconSlot><NewCommentIcon /></IconSlot>
              <BtnText>Νέο</BtnText>
              <BtnText>σχόλιο</BtnText>
            </BigBtn>
            <BigBtn $w={50} $off>
              <IconSlot><DelCommentIcon /></IconSlot>
              <BtnText>Διαγραφή</BtnText>
              <CaretRow><Caret $c="#b5b5b5" /></CaretRow>
            </BigBtn>
            <SmallCol $ml={8} $top={2} $gap={7.5}>
              <SmallRow $off><PrevIcon />Προηγούμενη</SmallRow>
              <SmallRow $off><PrevIcon />Επόμενη</SmallRow>
              <SmallRow $off><ShowCommentsIcon />Εμφάνιση σχολίων</SmallRow>
            </SmallCol>
          </GroupBody>
          <GroupLabel>Σχόλια</GroupLabel>
        </Group>

        <Group $w={284}>
          <GroupBody>
            <BigBtn $w={100} $ml={2}>
              <IconSlot><TrackIcon /></IconSlot>
              <BtnText>Παρακολούθηση</BtnText>
              <BtnText>αλλαγών <Caret /></BtnText>
            </BigBtn>
            <SmallCol $ml={2} $gap={4}>
              <SmallRow $gap={2} $h={21}>
                <DisplayIcon />
                <MarkupSelect>Όλες οι σημάνσεις<Caret /></MarkupSelect>
              </SmallRow>
              <SmallRow>
                <ShowMarkupIcon />Εμφάνιση σημάνσεων<Caret $m="0 0 0 1px" />
              </SmallRow>
              <SmallRow $mt={4}>
                <ReviewPaneIcon />Παράθυρο αναθεώρησης<Caret $m="0 0 0 12px" />
              </SmallRow>
            </SmallCol>
          </GroupBody>
          <GroupLabel>Παρακολούθηση</GroupLabel>
          <Launcher><LauncherIcon /></Launcher>
        </Group>

        <Group $w={100}>
          <GroupBody>
            <BigBtn $w={60} $ml={3}>
              <IconSlot><AcceptIcon /></IconSlot>
              <BtnText>Αποδοχή</BtnText>
              <CaretRow><Caret /></CaretRow>
            </BigBtn>
            <SmallCol $top={3} $gap={7} $ml={3}>
              <SmallRow $gap={7}><RejectIcon /><Caret /></SmallRow>
              <SmallRow><SmallDocArrow flip /></SmallRow>
              <SmallRow><SmallDocArrow /></SmallRow>
            </SmallCol>
          </GroupBody>
          <GroupLabel>Αλλαγές</GroupLabel>
        </Group>

        <Group $w={63}>
          <GroupBody $center>
            <BigBtn $w={62}>
              <IconSlot><CompareIcon /></IconSlot>
              <BtnText>Σύγκριση</BtnText>
              <CaretRow><Caret /></CaretRow>
            </BigBtn>
          </GroupBody>
          <GroupLabel>Σύγκριση</GroupLabel>
        </Group>

        <Group $w={67}>
          <GroupBody $center>
            <BigBtn $w={66}>
              <BoxSlot><ProtectIcon /></BoxSlot>
              <BtnText>Προστασία</BtnText>
              <CaretRow><Caret /></CaretRow>
            </BigBtn>
          </GroupBody>
        </Group>

        <Group $w={45}>
          <GroupBody $center>
            <BigBtn $w={44}>
              <BoxSlot><InkIcon /></BoxSlot>
              <BtnText>Μελάνι</BtnText>
              <CaretRow><Caret /></CaretRow>
            </BigBtn>
          </GroupBody>
        </Group>

        <Collapse><ChevronUp /></Collapse>
      </Ribbon>

      <Workspace>
        <DocArea>
          <CornerTab>
            <Svg width="6" height="6" viewBox="0 0 6 6"><path d="M1 0v5h5" fill="none" stroke="#555" strokeWidth="1.500" /></Svg>
          </CornerTab>
          <HRuler>
            {hNumbers.map((n, i) => (
              <React.Fragment key={i}>
                <RulerCell>{n}</RulerCell>
                <RulerCell><Dot /></RulerCell>
                <RulerCell><Tick /></RulerCell>
                <RulerCell><Dot /></RulerCell>
              </React.Fragment>
            ))}
            <Marker $x={113} $y={-2}>
              <Svg width="9" height="22" viewBox="0 0 9 22">
                <path d="M.5.500h8L4.500 5.500l4 5.500H.5l4-5.500z" fill="#fff" stroke="#8a8a8a" />
                <path d="M.5 14.500h8v7h-8z" fill="#f1f1f1" stroke="#8a8a8a" />
              </Svg>
            </Marker>
            <Marker $x={670} $y={4}>
              <Svg width="9" height="7" viewBox="0 0 9 7"><path d="M.5 6.500L4.500.5l4 6z" fill="#fff" stroke="#8a8a8a" /></Svg>
            </Marker>
          </HRuler>
          <VRuler>
            {vNumbers.map((n, i) => (
              <React.Fragment key={i}>
                <VCell><VNum>{n}</VNum></VCell>
                <VCell><Dot /></VCell>
                <VCell><VTick /></VCell>
                <VCell><Dot /></VCell>
              </React.Fragment>
            ))}
          </VRuler>
          <Page>
            <DocHeading>Ο Μύθος της Πανδώρας</DocHeading>
            <Para $mb={16.1}>
              <Line>Ο μύθος είναι έκφραση μιας βασικής άποψης για τη ζωή. Γι αυτό και</Line>
              <Line $left>κάθε λαός έχει πλάσει τους μύθους του.</Line>
            </Para>
            <Para>
              <Line $sel>Ο μύθος της Πανδώρας, που μας αφηγείται ο Ησίοδος και στα δύο</Line>
              <Line $sel>έργα του <b>Θεογονία</b> και <b>Έργα και Ημέρες</b>, απηχεί μια <Misspelled>παμπάλαιη</Misspelled></Line>
              <Line $sel>αντίληψη ότι η γυναίκα είναι η πηγή του κάθε κακού (πχ. Εύα, Ελένη</Line>
              <Line $sel $mr={10} $pr={11} $extra={17}>κλπ.) το ίδιο απορρέει και από διάφορους μύθους και άλλων λαών.</Line>
            </Para>
            <Para>
              <Line>Η Πανδώρα είναι η πρώτη γυναίκα που έπλασαν οι θεοί. Όταν λοιπόν</Line>
              <Line>ο Προμηθέας έκλεψε τη φωτιά από τον Όλυμπο και την έφερε δώρο</Line>
              <Line>στους ανθρώπους, ο Δίας θύμωσε και αποφάσισε να τους τιμωρήσει</Line>
            </Para>
          </Page>
        </DocArea>

        <Pane>
          <PaneHead>
            <PaneTitle>Περιορισμός επεξεργασίας</PaneTitle>
            <Caret $c="#777" $s={5} />
            <PaneClose>
              <Svg width="10" height="10" viewBox="0 0 10 10"><path d="M1 1l8 8M9 1L1 9" stroke="#555" strokeWidth="2" /></Svg>
            </PaneClose>
          </PaneHead>

          <Heading $mt={8}>1. Περιορισμοί μορφοποίησης</Heading>
          <Indent $mt={5}>
            <CheckRow><CheckBox $plain />Περιορισμός μορφοποίησης σε επιλεγμένα στυλ</CheckRow>
          </Indent>
          <Indent $mt={7}><PaneLink>Ρυθμίσεις...</PaneLink></Indent>

          <Heading $mt={10}>2. Περιορισμοί επεξεργασίας</Heading>
          <Indent $mt={5}>
            <CheckRow>
              <CheckBox><CheckMark /></CheckBox>
              <div>Δυνατότητα μόνο αυτού του τύπου επεξεργασίας στο<br />έγγραφο:</div>
            </CheckRow>
          </Indent>
          <Indent $mt={5}>
            <SplitSelect>
              Καμία αλλαγή (μόνο για ανάγνωση)
              <SplitArrow><Caret $c="#444" $s={4} /></SplitArrow>
            </SplitSelect>
          </Indent>

          <Heading $mt={26} $ml={8}>Εξαιρέσεις (προαιρετικές)</Heading>
          <Indent $mt={5}>
            <PaneText>Επιλέξτε τμήματα του εγγράφου και χρήστες στους</PaneText>
            <PaneText>οποίους επιτρέπεται να τα επεξεργαστούν ελεύθερα.</PaneText>
          </Indent>
          <Indent $mt={2}><PaneText>Ομάδες:</PaneText></Indent>
          <Indent $mt={2}>
            <GroupList>
              <GroupRow>Όλοι</GroupRow>
              <Spotlight />
              <ListCheck><CheckMark /></ListCheck>
              <ClickRing />
              <Pointer><CursorArrow /></Pointer>
            </GroupList>
          </Indent>
          <Indent $mt={7}>
            <MoreUsers><UsersIcon /><PaneLink>Περισσότεροι χρήστες...</PaneLink></MoreUsers>
          </Indent>

          <Heading $mt={17}>3. Έναρξη ενεργοποίησης</Heading>
          <Indent $mt={4}>
            <PaneText>Είστε έτοιμοι να εφαρμόσετε αυτές τις ρυθμίσεις: (Μπορείτε</PaneText>
            <PaneText>να τις απενεργοποιήσετε αργότερα)</PaneText>
          </Indent>
          <Indent $mt={2}><PaneButton>Ναι, να ξεκινήσει η ενεργοποίηση προστασίας</PaneButton></Indent>

          <Heading $mt={25}>Δείτε επίσης</Heading>
          <Indent $mt={6}><PaneLink>Περιορισμός δικαιωμάτων...</PaneLink></Indent>
        </Pane>
      </Workspace>

      <StatusBar>
        <StatusItem $w={72}>Ενότητα: 1</StatusItem>
        <StatusItem $w={94}>Σελίδα 1 από 4</StatusItem>
        <StatusItem $w={114}>46 από 1040 λέξεις</StatusItem>
        <StatusItem $w={31}><BookXIcon /></StatusItem>
        <StatusItem $w={64}>Ελληνικά</StatusItem>
        <StatusItem $w={624}><MacroIcon /></StatusItem>
        <ViewBtn $w={14}><ReadViewIcon /></ViewBtn>
        <StatusItem $w={12} />
        <ViewBtn $on><PrintViewIcon /></ViewBtn>
        <StatusItem $w={12} />
        <ViewBtn $w={14}><WebViewIcon /></ViewBtn>
        <Zoom>
          <Svg width="6" height="2" viewBox="0 0 6 2"><path d="M0 1h6" stroke="#666" strokeWidth="2" /></Svg>
          <ZoomTrack><ZoomThumb /></ZoomTrack>
          <Svg width="7" height="7" viewBox="0 0 7 7"><path d="M0 3.500h7M3.500 0v7" stroke="#666" strokeWidth="1.500" /></Svg>
          <ZoomText>100%</ZoomText>
        </Zoom>
      </StatusBar>

      <TaskBar>
        <TaskBtn><WinLogo /></TaskBtn>
        <TaskBtn><TaskSearch /></TaskBtn>
        <TaskBtn><TaskView /></TaskBtn>
        <TaskBtn $ml={4}><EdgeLogo /></TaskBtn>
        <TaskBtn $run><FolderLogo /></TaskBtn>
        <TaskBtn><StoreLogo /></TaskBtn>
        <TaskBtn><MailLogo /></TaskBtn>
        <TaskBtn $run $ml={3}><StackLogo /></TaskBtn>
        <TaskBtn $run $on $ml={1}><WordLogo /></TaskBtn>
        <Tray>
          <TrayItem>
            <Svg width="17" height="15" viewBox="0 0 17 15">
              <circle cx="11" cy="4" r="3" fill="none" stroke="#eee" />
              <circle cx="5" cy="7" r="3" fill="none" stroke="#eee" />
              <path d="M0 15c0-3 2-5 5-5s5 2 5 5M12 8c3 0 5 2 5 5" fill="none" stroke="#eee" />
            </Svg>
          </TrayItem>
          <TrayItem $ml={20}><ChevronUp c="#eee" s={12} /></TrayItem>
          <TrayItem $ml={10}>
            <Svg width="16" height="14" viewBox="0 0 16 14">
              <path d="M3 1.500h12.500v9H3M1 .5h4v4H1zM9.500 10.500v2.500M5 13.500h9" fill="none" stroke="#eee" />
            </Svg>
          </TrayItem>
          <TrayItem $ml={8}>
            <Svg width="16" height="14" viewBox="0 0 16 14">
              <path d="M.5 5h3l3.500-3.500v11L3.500 9h-3zM9.500 4.500c1 1.500 1 3.500 0 5M11.500 3c1.800 2.500 1.800 5.500 0 8M13.500 1.500c2.700 3.500 2.700 7.500 0 11" fill="none" stroke="#eee" />
            </Svg>
          </TrayItem>
          <Lang>ΕΛ</Lang>
          <Clock>2:05 μμ<br />23/10/2018</Clock>
          <TrayItem $ml={9}>
            <Svg width="16" height="16" viewBox="0 0 16 16">
              <path d="M.5 1.500h15v11h-5l-2.500 2.500-2.500-2.500h-5z" fill="none" stroke="#eee" />
            </Svg>
          </TrayItem>
        </Tray>
        <ShowDesktop />
      </TaskBar>
    </Frame>
  );
};

export default App;
